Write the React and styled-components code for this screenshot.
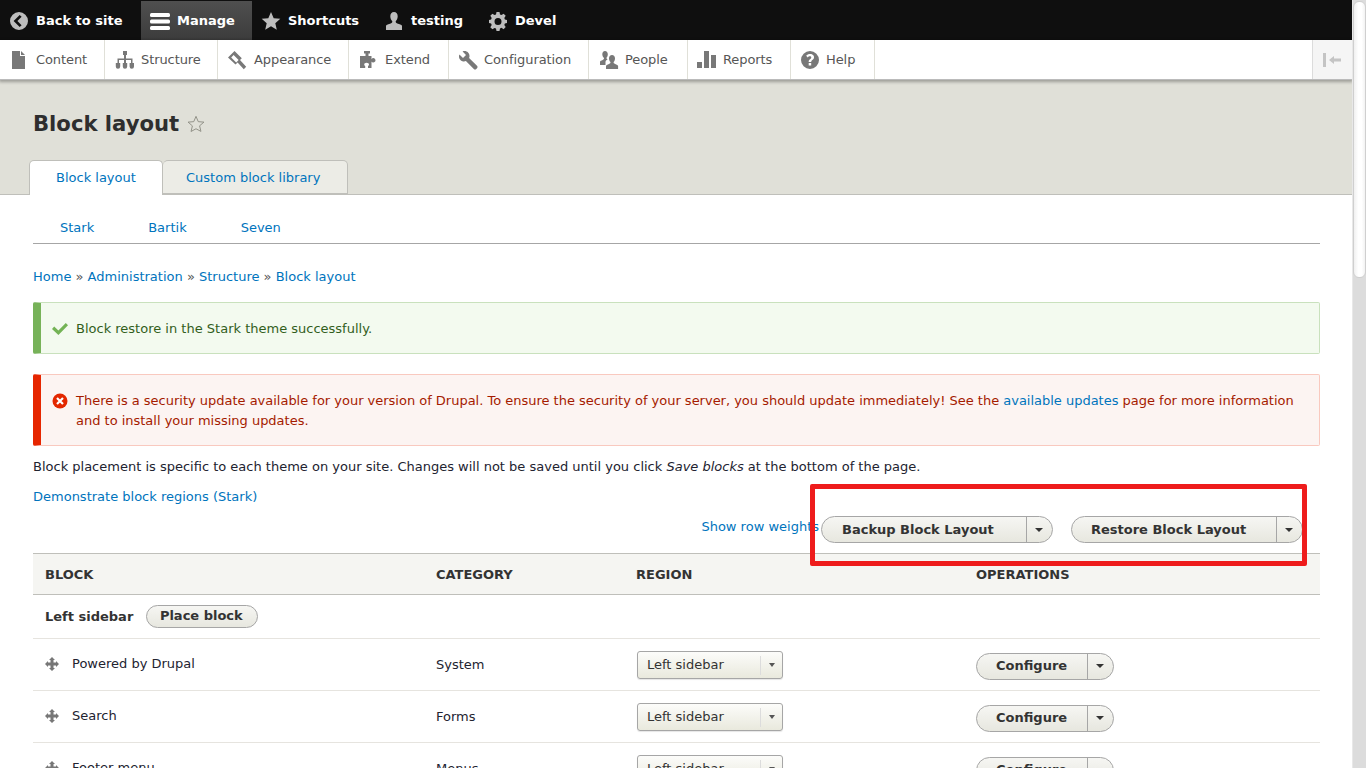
import React from "react";
import styled, { createGlobalStyle } from "styled-components";

const Global = createGlobalStyle`
  html, body { margin: 0; padding: 0; height: 100%; overflow: hidden; background: #fff; }
  body { font-family: "DejaVu Sans", "Liberation Sans", sans-serif; font-size: 13px; color: #222330; line-height: 20px; }
  * { box-sizing: border-box; }
`;

const Shell = styled.div`display: flex; height: 768px; width: 1366px; position: relative; overflow: hidden;`;
const Page = styled.div`flex: 1; min-width: 0; overflow: hidden;`;
const Track = styled.div`width: 14px; background: #dcdcdc; border-left: 1px solid #e8e8e8; padding-top: 1px;`;
const Thumb = styled.div`height: 277px; background: linear-gradient(90deg, #f0f0f0, #fff 40%, #fff 70%, #f2f2f2); border: 1px solid #cfcfcf; border-radius: 6px;`;

const Toolbar = styled.div`display: flex; height: 40px; background: #0f0f0f;`;
const ToolItem = styled.a`
  display: flex; align-items: center; height: 40px; width: ${p => p.$w}px; padding-left: ${p => p.$pad}px; color: #fff; font-weight: 700; font-size: 13px;
  background: ${p => p.$active ? "linear-gradient(#4f4f4f, #3c3c3c)" : "transparent"};
  border-top: 1px solid #0f0f0f;
`;
const ToolIcon = styled.svg`width: ${p => p.$w}px; height: 20px; margin-right: ${p => p.$gap}px; flex: none; fill: ${p => p.$fill};`;

const Tray = styled.div`display: flex; height: 40px; background: #fff; box-shadow: 0 1px 3px 1px rgba(0,0,0,.3); position: relative; border-bottom: 1px solid #bbb;`;
const TrayItem = styled.a`display: flex; align-items: center; width: ${p => p.$w}px; padding-left: ${p => p.$pad}px; height: 39px; color: #565656; letter-spacing: -0.08px; border-right: 1px solid #e0e0d8;`;
const TrayIcon = styled.svg`width: 20px; height: 20px; margin-right: 6px; flex: none; fill: #787878;`;
const Toggle = styled.div`margin-left: auto; width: 40px; height: 39px; background: #f5f5f5; border-left: 1px solid #dcdcdc; display: flex; align-items: center; justify-content: center;`;

const Header = styled.div`background: #e0e0d8; height: 115px; padding: 29px 0 0 33px; border-bottom: 1px solid #bfbfba; display: flex; flex-direction: column;`;
const TitleRow = styled.div`display: flex; align-items: center; height: 30px; gap: 8px;`;
const Title = styled.h1`margin: 0; font-size: 21.15px; font-weight: 700; color: #2e2e2e; line-height: 30px;`;
const StarIcon = styled.svg`width: 18px; height: 18px; fill: none; stroke: #8a8a80; stroke-width: 1;`;
const Tabs = styled.div`display: flex; margin: 21px 0 0 -4px;`;
const Tab = styled.a`
  display: block; height: ${p => p.$active ? 35 : 34}px; line-height: 34px; width: ${p => p.$w}px; padding-left: ${p => p.$pl}px; color: #0074bd;
  background: ${p => p.$active ? "#fff" : "#ecece6"};
  border: 1px solid #bfbfba; border-bottom: ${p => p.$active ? "0" : "1px solid #bfbfba"};
  border-left: ${p => p.$active ? "1px solid #bfbfba" : "0"};
  border-radius: 5px 5px 0 0; position: relative;
`;

const Content = styled.div`padding: 0 32px 0 33px;`;
const SubTabs = styled.div`display: flex; height: 49px; border-bottom: 1px solid #a6a6a6; padding-top: 23px;`;
const SubTab = styled.a`color: #0074bd; margin-left: ${p => p.$ml}px; line-height: 20px;`;
const Crumbs = styled.div`margin-top: 23px; color: #555; line-height: 20px;`;
const Link = styled.a`color: #0074bd;`;

const Msg = styled.div`
  display: flex; align-items: ${p => p.$top ? "flex-start" : "center"}; margin-top: ${p => p.$mt}px; height: ${p => p.$h}px;
  padding: ${p => p.$top ? "16px" : "2px"} 20px 0 11px; line-height: 20px; letter-spacing: ${p => p.$top ? "-0.012px" : "0"};
  background: ${p => p.$bg}; color: ${p => p.$color}; border: 1px solid ${p => p.$border}; border-left: 8px solid ${p => p.$left}; border-radius: 2px;
`;
const MsgIcon = styled.svg`width: 16px; height: 16px; flex: none; margin-right: 8px; margin-top: ${p => p.$mt || 0}px;`;

const Intro = styled.p`margin: 11px 0 0; line-height: 20px; color: #222330;`;
const Demo = styled.div`margin-top: 10px; line-height: 20px;`;
const ActionRow = styled.div`display: flex; justify-content: flex-end; align-items: flex-start; height: 46px; padding: 10px 17px 0 0;`;
const Weights = styled.a`color: #0074bd; line-height: 20px; margin-right: 2px;`;
const Split = styled.div`
  display: flex; height: ${p => p.$h}px; width: ${p => p.$w}px; margin-left: ${p => p.$ml || 0}px; margin-top: ${p => p.$mt || 0}px;
  border: 1px solid #a6a6a6; border-radius: 20px; background: linear-gradient(#f6f6f3, #e7e7df); overflow: hidden; position: relative; z-index: 1;
`;
const SplitMain = styled.div`flex: 1; display: flex; align-items: center; padding-left: ${p => p.$pl}px; font-weight: 700; color: #333; font-size: 13px;`;
const SplitCaret = styled.div`
  width: 26px; flex: none; padding-right: 1px; border-left: 1px solid #a6a6a6; display: flex; align-items: center; justify-content: center;
  &::after { content: ""; border: 4px solid transparent; border-top-color: #333; border-bottom: 0; }
`;

const Table = styled.table`width: 1287px; table-layout: fixed; border-collapse: collapse;`;
const Th = styled.th`
  text-align: left; height: 41px; padding: 1px 12px 0; text-transform: uppercase; font-size: 13px; font-weight: 700; color: #333;
  background: #f5f5f2; border-top: 1px solid #bfbfba; border-bottom: 1px solid #bfbfba; width: ${p => p.$w ? p.$w + "px" : "auto"};
`;
const Td = styled.td`height: ${p => p.$h || 52}px; padding: 0 12px; border-bottom: 1px solid #e6e4df; color: #222330; vertical-align: middle;`;
const RegionCell = styled.div`display: flex; align-items: center; gap: 13px;`;
const RegionName = styled.strong`font-weight: 700; color: #333;`;
const Place = styled.a`
  display: block; width: 112px; height: 23px; line-height: 20px; padding-right: 2px; text-align: center; border: 1px solid #a6a6a6; border-radius: 20px; font-weight: 700; color: #333;
  background: linear-gradient(#f6f6f3, #e7e7df);
`;
const BlockCell = styled.div`display: flex; align-items: center; margin-top: -2px;`;
const Handle = styled.svg`width: 14px; height: 14px; fill: #777; flex: none; margin-right: 13px;`;
const Select = styled.div`
  width: 146px; height: 28px; border: 1px solid #a6a6a6; border-radius: 3px; background: linear-gradient(#fcfcfa, #e9e9dd);
  display: flex; align-items: center; padding-left: 9px; margin: 0 0 0 1px; position: relative; color: #333; box-shadow: 0 1px 1px rgba(0,0,0,.1);
`;
const SelectArrow = styled.div`
  position: absolute; right: 0; top: 4px; height: 19px; width: 22px; border-left: 1px solid #dcdcdc; display: flex; align-items: center; justify-content: center;
  &::after { content: ""; border: 3px solid transparent; border-top: 4px solid #555; border-bottom: 0; }
`;
const Annotation = styled.div`position: absolute; left: 810px; top: 484px; width: 497px; height: 82px; border: 5px solid #ee1c1c; border-radius: 2px; z-index: 5;`;

const icons = {
  back: <><path d="M9 0a9 9 0 1 0 0 18A9 9 0 0 0 9 0zm2.6 13.2-1.9 1.9L3.6 9l6.100-6.100 1.900 1.900L7.400 9z" /></>,
  bars: <><rect x="0" y="2" width="20" height="4" rx="1.500" /><rect x="0" y="8.500" width="20" height="4" rx="1.500" /><rect x="0" y="15" width="20" height="4" rx="1.500" /></>,
  star: <path d="M10 1l2.700 6.200 6.600.6-5 4.400 1.500 6.500L10 15.300l-5.800 3.400 1.500-6.500-5-4.400 6.600-.6z" />,
  user: <path d="M9 1c2.300 0 3.700 1.700 3.700 4.200 0 2-.9 4-2 5 0 1.400.4 1.900 2.300 2.500 2.400.7 4 1.300 4 2.300V19H1v-4c0-1 1.600-1.600 4-2.300 1.900-.6 2.300-1.100 2.300-2.500-1.100-1-2-3-2-5C5.300 2.700 6.700 1 9 1z" />,
  gear: <path fillRule="evenodd" d="M7.500 1h3l.5 2.500 1.500.6 2.100-1.400 2.100 2.100-1.400 2.100.6 1.600 2.500.5v3l-2.500.5-.6 1.500 1.400 2.100-2.100 2.100-2.100-1.400-1.500.6-.5 2.500h-3L7 17.500l-1.500-.6-2.100 1.400-2.100-2.100 1.400-2.100-.6-1.500L-.4 12V9l2.500-.5.600-1.600-1.400-2.100 2.100-2.100 2.100 1.400L7 3.500zM9 7a3.500 3.500 0 1 0 0 7 3.500 3.500 0 0 0 0-7z" />,
  file: <path d="M2 1h8v5h5v13H2zM11 1l4 4h-4z" />,
  sitemap: <path d="M8 1h4v4h-1v3.500h6.500V13h1.500v3.500a2.200 2.200 0 1 1-4.400 0V13H16v-3h-5v3h1.200v3.500a2.200 2.200 0 1 1-4.400 0V13H9v-3H4v3h1.200v3.500a2.200 2.200 0 1 1-4.400 0V13h1.700V8.500H9V5H8z" />,
  hammer: <path fillRule="evenodd" d="M0 7.500 6.500 1l7.300 7.300-1.800 1.800 6.200 6.700-2.400 2.400-6.200-6.700-2.100 2.100zM3.200 7.500 8.200 12.500l2.400-2.400-5-5z" />,
  puzzle: <path d="M5 1h6v2.500H9.500V6h3v3.200c.5-.8 1-1.200 1.800-1.200 1.200 0 2.200 1 2.200 2.300s-1 2.200-2.200 2.200c-.8 0-1.300-.3-1.800-1.100V18H9v-2c.5-.3 1-.8 1-1.500 0-1-1-1.800-2.400-1.800S5.200 13.500 5.200 14.500c0 .7.400 1.200 1 1.500v2H1V6h5.500V3.500H5z" />,
  wrench: <path d="M6.500 1c2.800 0 5 2.200 5 5 0 .7-.1 1.300-.4 1.900l7.900 7.900c.7.7.7 1.800 0 2.500l-.7.7c-.7.700-1.800.700-2.500 0L7.900 11.100c-.6.300-1.200.4-1.900.4-2.800 0-5-2.200-5-5 0-.7.1-1.300.4-1.900L5 8l3-3-3.400-3.600c.6-.3 1.200-.4 1.900-.4z" />,
  people: <path d="M6 1c1.700 0 2.800 1.300 2.800 3.300 0 1.300-.5 2.600-1.300 3.400 0 1 .3 1.300 1.300 1.700-.8.300-2.300 1-2.300 2.600V15H1v-3c0-1 1.300-1.500 2.700-2 1-.4 1.300-.8 1.300-1.900C4 7.200 3.300 5.800 3.300 4.300 3.300 2.300 4.300 1 6 1zm7 4c1.800 0 3 1.400 3 3.500 0 1.400-.6 2.800-1.400 3.600 0 1.100.3 1.500 1.500 1.900 1.600.6 3 1.100 3 2.100V19H7v-2.900c0-1 1.400-1.500 3-2.100 1.200-.4 1.500-.8 1.500-1.900C10.600 11.300 10 9.900 10 8.500 10 6.400 11.200 5 13 5z" />,
  chart: <><rect x="0" y="12" width="5" height="6" /><rect x="7" y="1" width="5" height="17" /><rect x="14" y="5" width="5" height="13" /></>,
  help: <path fillRule="evenodd" d="M10 1a9 9 0 1 0 0 18 9 9 0 0 0 0-18zm1.200 14.500H8.700v-2.400h2.500zm2.700-7.300c-.5 1.600-2.700 1.800-2.700 3.600v.2H8.700v-.6c0-2.300 2.500-2.300 2.600-4 0-.7-.6-1.200-1.400-1.200-.9 0-1.700.5-2.200 1.200L6.200 5.700C7.100 4.500 8.500 3.900 10.100 3.900c2.600 0 4.500 1.800 3.800 4.300z" />,
};

const toolbar = [
  ["Back to site", "back", 18, 8, 10, false, "#bdbdbd", "0 0 18 18", 141],
  ["Manage", "bars", 20, 7, 9, true, "#fff", "0 0 20 20", 111],
  ["Shortcuts", "star", 20, 7, 9, false, "#bdbdbd", "0 0 20 20", 123],
  ["testing", "user", 18, 8, 10, false, "#bdbdbd", "0 0 18 20", 104],
  ["Devel", "gear", 18, 8, 10, false, "#bdbdbd", "0 0 18 20", 90],
];
const tray = [
  ["Content", "file", 105, 10], ["Structure", "sitemap", 113, 10], ["Appearance", "hammer", 131, 10], ["Extend", "puzzle", 100, 10],
  ["Configuration", "wrench", 140, 9], ["People", "people", 99, 10], ["Reports", "chart", 103, 9], ["Help", "help", 84, 9],
];
const blocks = [["Powered by Drupal", "System"], ["Search", "Forms"], ["Footer menu", "Menus"]];

const Move = () => (
  <Handle viewBox="0 0 14 14"><path d="M7 0l3 3H8.500v2.500H11V4l3 3-3 3V8.500H8.500V11H10l-3 3-3-3h1.500V8.500H3V10L0 7l3-3v1.500h2.500V3H4z" /></Handle>
);

export default function App() {
  return (
    <>
      <Global />
      <Shell>
        <Page>
          <Toolbar>
            {toolbar.map(([t, ic, w, gap, pad, active, fill, vb, width]) => (
              <ToolItem key={t} $active={active} $pad={pad} $w={width}>
                <ToolIcon $w={w} $gap={gap} $fill={fill} viewBox={vb}>{icons[ic]}</ToolIcon>{t}
              </ToolItem>
            ))}
          </Toolbar>
          <Tray>
            {tray.map(([t, ic, w, pad]) => (
              <TrayItem key={t} $w={w} $pad={pad}>
                <TrayIcon viewBox="0 0 20 20">{icons[ic]}</TrayIcon>{t}
              </TrayItem>
            ))}
            <Toggle>
              <svg width="20" height="14" viewBox="0 0 20 14" fill="#c4c4c4"><rect x="0" y="0" width="3" height="14" /><path d="M6 7l5-4v2.500h7v3h-7V11z" /></svg>
            </Toggle>
          </Tray>
          <Header>
            <TitleRow>
              <Title>Block layout</Title>
              <StarIcon viewBox="0 0 20 20"><path d="M10 1.500l2.500 5.900 6.300.5-4.800 4.100 1.500 6.200L10 15.300l-5.500 3 1.500-6.200L1.200 7.900l6.300-.5z" /></StarIcon>
            </TitleRow>
            <Tabs>
              <Tab $active $w={134} $pl={26}>Block layout</Tab>
              <Tab $w={185} $pl={23}>Custom block library</Tab>
            </Tabs>
          </Header>
          <Content>
            <SubTabs>
              <SubTab $ml={27}>Stark</SubTab>
              <SubTab $ml={54}>Bartik</SubTab>
              <SubTab $ml={54}>Seven</SubTab>
            </SubTabs>
            <Crumbs>
              <Link>Home</Link> » <Link>Administration</Link> » <Link>Structure</Link> » <Link>Block layout</Link>
            </Crumbs>
            <Msg $mt={15} $h={52} $bg="#f3faef" $color="#325e1c" $border="#c9e1bd" $left="#77b259">
              <MsgIcon viewBox="0 0 16 16"><path fill="#73b355" d="M6.400 14.100 0 7.900l2.200-2.300 4.200 4L13.800 2 16 4.300z" /></MsgIcon>
              Block restore in the Stark theme successfully.
            </Msg>
            <Msg $top $mt={20} $h={72} $bg="#fcf4f2" $color="#a51b00" $border="#f9c9bf" $left="#e62600">
              <MsgIcon $mt={2} viewBox="0 0 16 16"><circle cx="8" cy="8" r="7.500" fill="#e32700" /><path d="M5 5l6 6M11 5l-6 6" stroke="#fff" strokeWidth="2.200" /></MsgIcon>
              <div>There is a security update available for your version of Drupal. To ensure the security of your server, you should update immediately! See the <Link>available updates</Link> page for more information and to install your missing updates.</div>
            </Msg>
            <Intro>Block placement is specific to each theme on your site. Changes will not be saved until you click <em>Save blocks</em> at the bottom of the page.</Intro>
            <Demo><Link>Demonstrate block regions (Stark)</Link></Demo>
            <ActionRow>
              <Weights>Show row weights</Weights>
              <Split $w={232} $h={27} $mt={-1}><SplitMain $pl={20}>Backup Block Layout</SplitMain><SplitCaret /></Split>
              <Split $w={232} $h={27} $ml={18} $mt={-1}><SplitMain $pl={19}>Restore Block Layout</SplitMain><SplitCaret /></Split>
            </ActionRow>
            <Table>
              <thead>
                <tr><Th $w={391}>Block</Th><Th $w={200}>Category</Th><Th $w={340}>Region</Th><Th>Operations</Th></tr>
              </thead>
              <tbody>
                <tr>
                  <Td colSpan={4} $h={44}>
                    <RegionCell><RegionName>Left sidebar</RegionName><Place>Place block</Place></RegionCell>
                  </Td>
                </tr>
                {blocks.map(([name, cat]) => (
                  <tr key={name}>
                    <Td><BlockCell><Move />{name}</BlockCell></Td>
                    <Td>{cat}</Td>
                    <Td><Select>Left sidebar<SelectArrow /></Select></Td>
                    <Td><Split $w={138} $h={27} $mt={3}><SplitMain $pl={19}>Configure</SplitMain><SplitCaret /></Split></Td>
                  </tr>
                ))}
              </tbody>
            </Table>
          </Content>
        </Page>
        <Track><Thumb /></Track>
        <Annotation />
      </Shell>
    </>
  );
}
